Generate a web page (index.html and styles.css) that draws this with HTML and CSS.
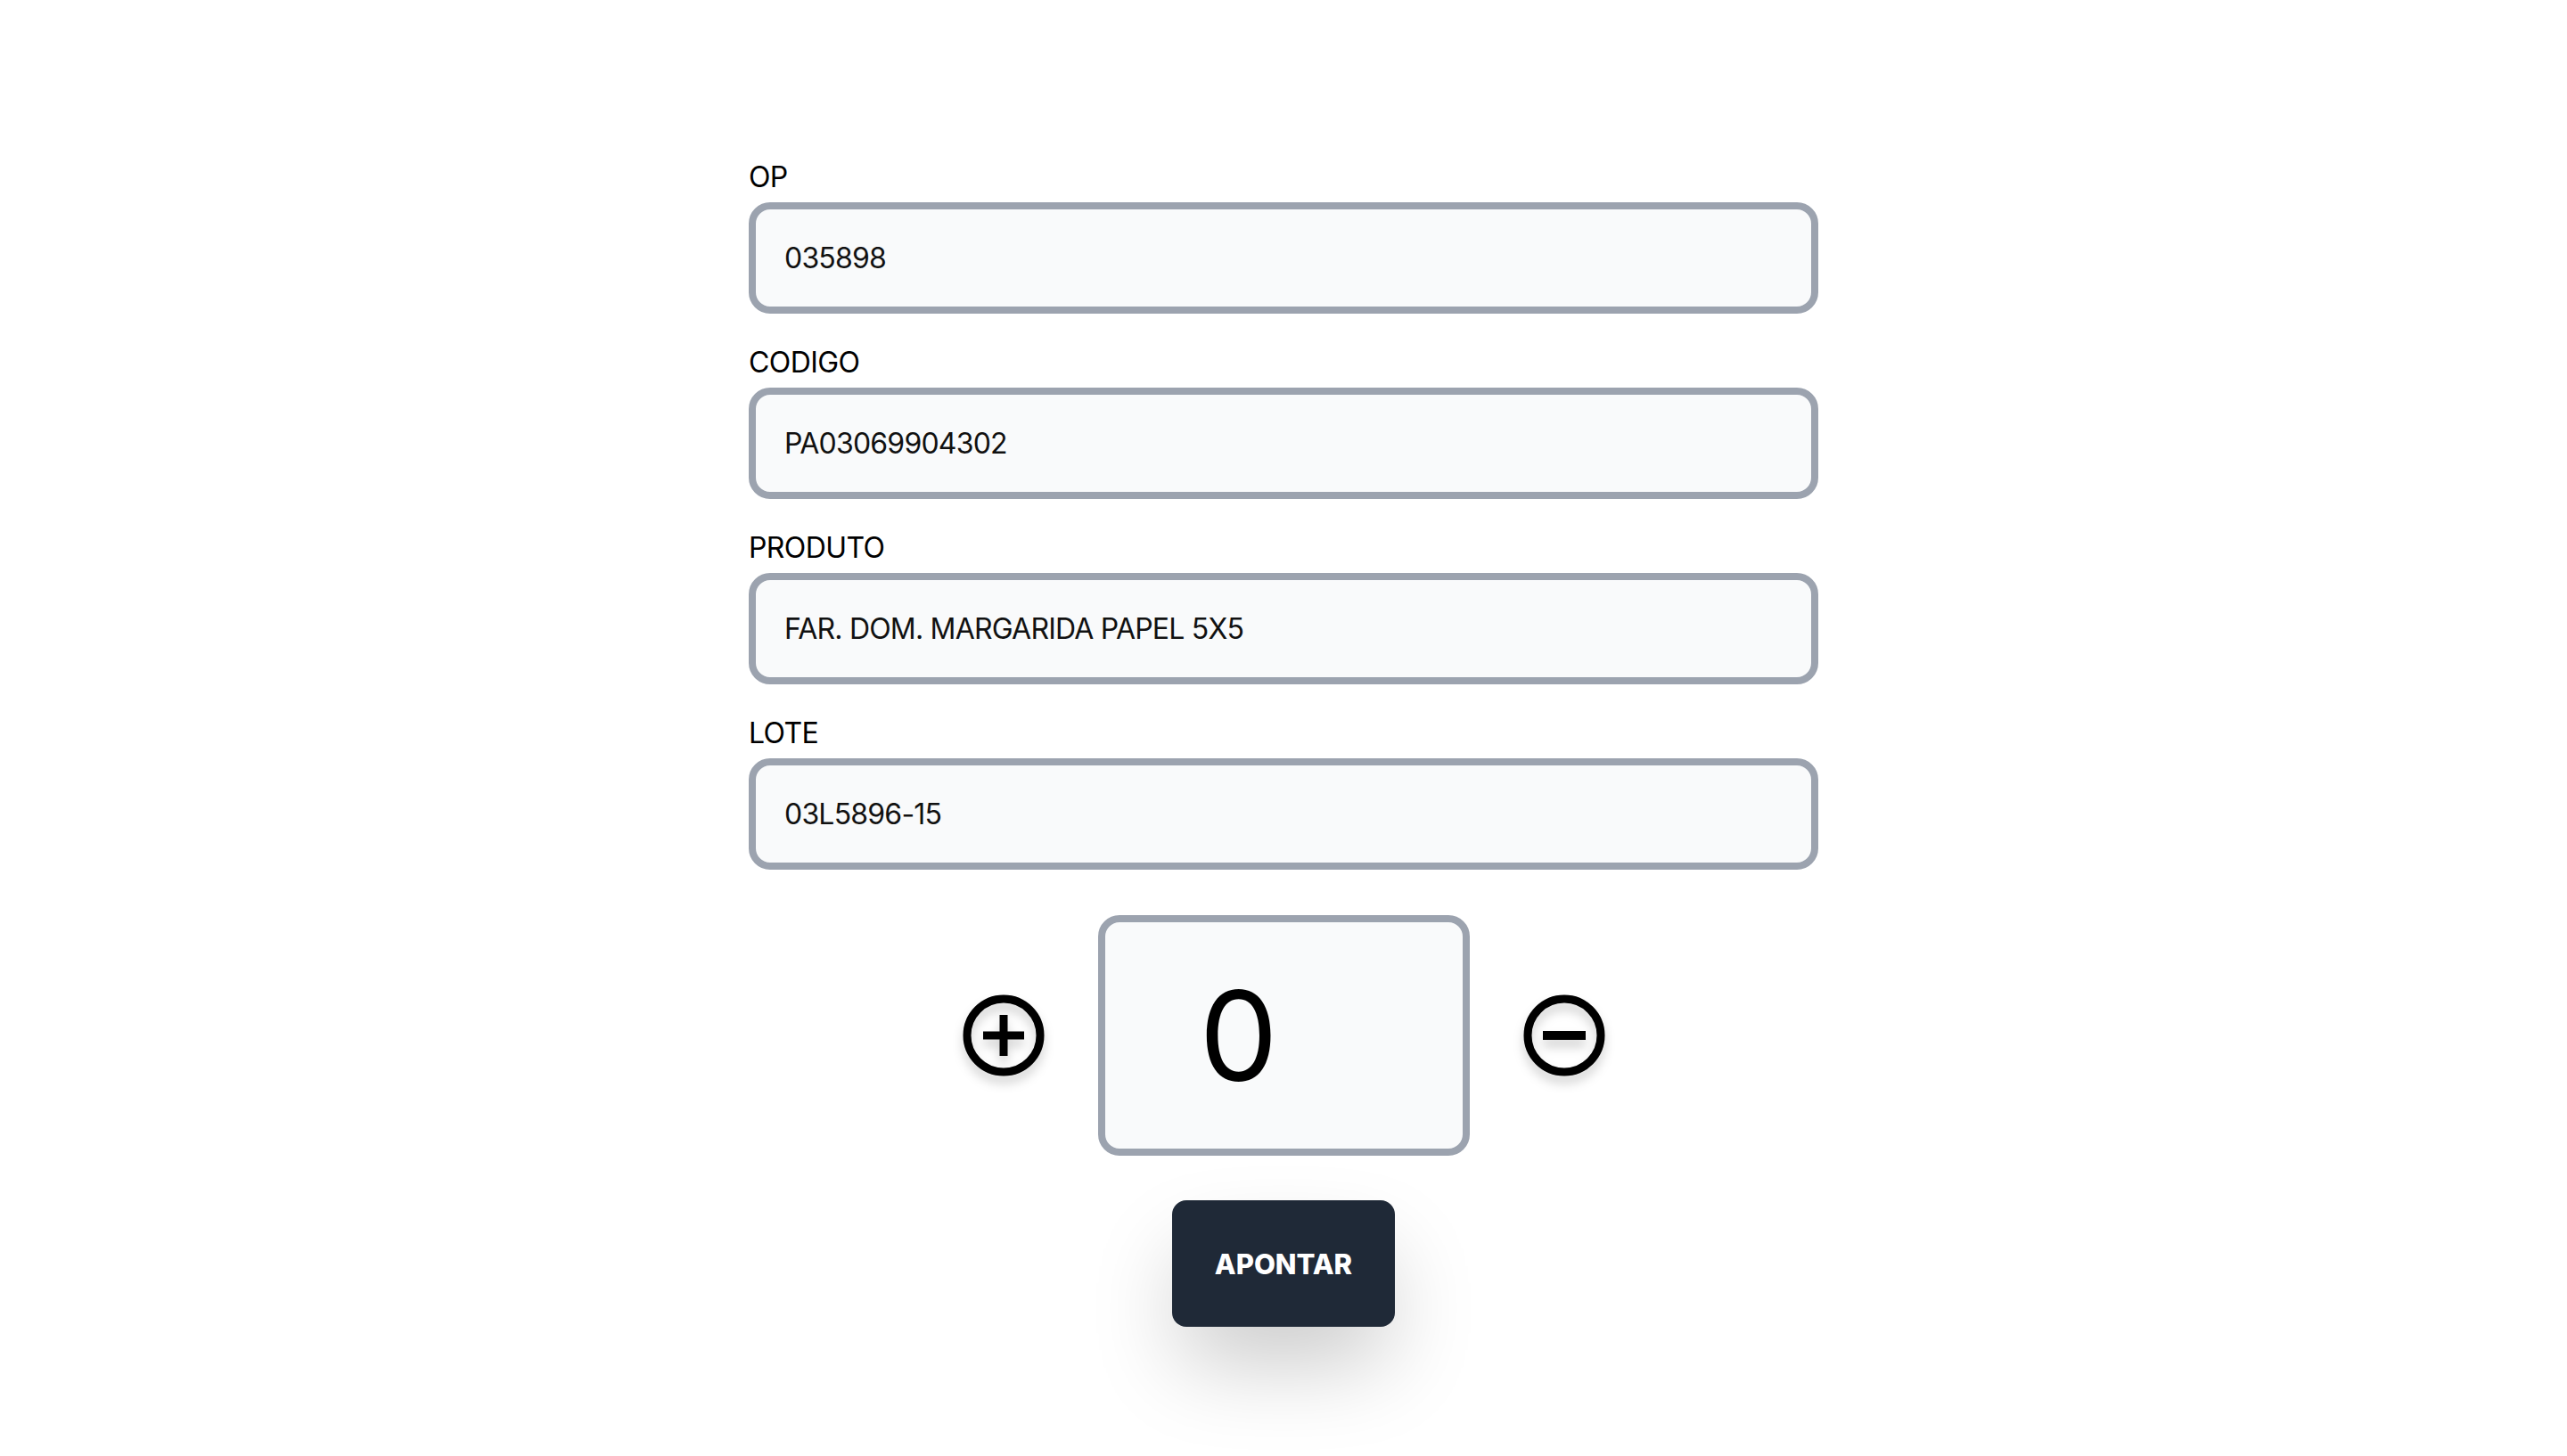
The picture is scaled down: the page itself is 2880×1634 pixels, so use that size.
FILE: index.html
```html
<!DOCTYPE html>
<html lang="pt">
<head>
	<meta charset="UTF-8">
	<title>Apontamento</title>
	<link rel="stylesheet" href="styles.css">
</head>
<body>
	<div class="apontForm">
		<div class="field">
			<label class="fieldLabel" for="op">OP</label>
			<input class="fieldInput" id="op" type="text" value="035898">
		</div>
		<div class="field">
			<label class="fieldLabel" for="codigo">CODIGO</label>
			<input class="fieldInput" id="codigo" type="text" value="PA03069904302">
		</div>
		<div class="field">
			<label class="fieldLabel" for="produto">PRODUTO</label>
			<input class="fieldInput" id="produto" type="text" value="FAR. DOM. MARGARIDA PAPEL 5X5">
		</div>
		<div class="field">
			<label class="fieldLabel" for="lote">LOTE</label>
			<input class="fieldInput" id="lote" type="text" value="03L5896-15">
		</div>

		<div class="counter">
			<!-- mais -->
			<button class="counterBtn" type="button" aria-label="mais">
				<svg width="92" height="92" viewBox="0 0 92 92">
					<circle cx="46" cy="46" r="41" fill="none" stroke="#000" stroke-width="9"/>
					<path d="M46 23 V69 M23 46 H69" stroke="#000" stroke-width="9"/>
				</svg>
			</button>
			<input class="counterInput" type="text" value="0">
			<!-- menos -->
			<button class="counterBtn" type="button" aria-label="menos">
				<svg width="92" height="92" viewBox="0 0 92 92">
					<circle cx="46" cy="46" r="41" fill="none" stroke="#000" stroke-width="9"/>
					<path d="M22 46 H70" stroke="#000" stroke-width="10"/>
				</svg>
			</button>
		</div>

		<div class="actions">
			<button class="submitBtn" type="button">APONTAR</button>
		</div>
	</div>
</body>
</html>
```

FILE: styles.css
```css
html,
body {
  min-height: 100%;
}
body {
  margin: 0;
  background: #fff;
  font-family: "Inter", "Open Sans", sans-serif;
  color: #000;
}
.apontForm {
  width: 1200px;
  margin: 0 auto;
  padding: 175px 0 140px;
  display: flex;
  flex-direction: column;
}
.field {
  display: flex;
  flex-direction: column;
  margin-bottom: 31px;
}
.fieldLabel {
  font-size: 32px;
  line-height: 48px;
  letter-spacing: -0.6px;
  margin-bottom: 4px;
}
.fieldInput {
  box-sizing: border-box;
  width: 100%;
  height: 125px;
  padding: 0 32px;
  border: 8px solid #9ca3af;
  border-radius: 24px;
  background: #f9fafb;
  font-family: inherit;
  font-size: 32px;
  letter-spacing: -0.8px;
  color: #111;
  outline: none;
}
.counter {
  display: flex;
  justify-content: center;
  align-items: center;
  gap: 60px;
  margin-top: 20px;
}
.counterBtn {
  padding: 0;
  border: 0;
  background: none;
  width: 92px;
  height: 92px;
  cursor: pointer;
  filter: drop-shadow(0 8px 6px rgba(0, 0, 0, 0.18));
}
.counterBtn svg {
  display: block;
}
.counterInput {
  box-sizing: border-box;
  width: 417px;
  height: 270px;
  padding: 0 0 0 106px;
  border: 8px solid #9ca3af;
  border-radius: 24px;
  background: #f9fafb;
  font-family: inherit;
  font-size: 140px;
  color: #000;
  outline: none;
}
.actions {
  display: flex;
  justify-content: center;
  margin-top: 50px;
}
.submitBtn {
  width: 250px;
  height: 142px;
  border: 0;
  border-radius: 16px;
  background: #1f2937;
  color: #fff;
  font-family: inherit;
  font-size: 31px;
  font-weight: 800;
  box-shadow: 0 50px 100px -12px rgba(0, 0, 0, 0.22);
  cursor: pointer;
}
```
